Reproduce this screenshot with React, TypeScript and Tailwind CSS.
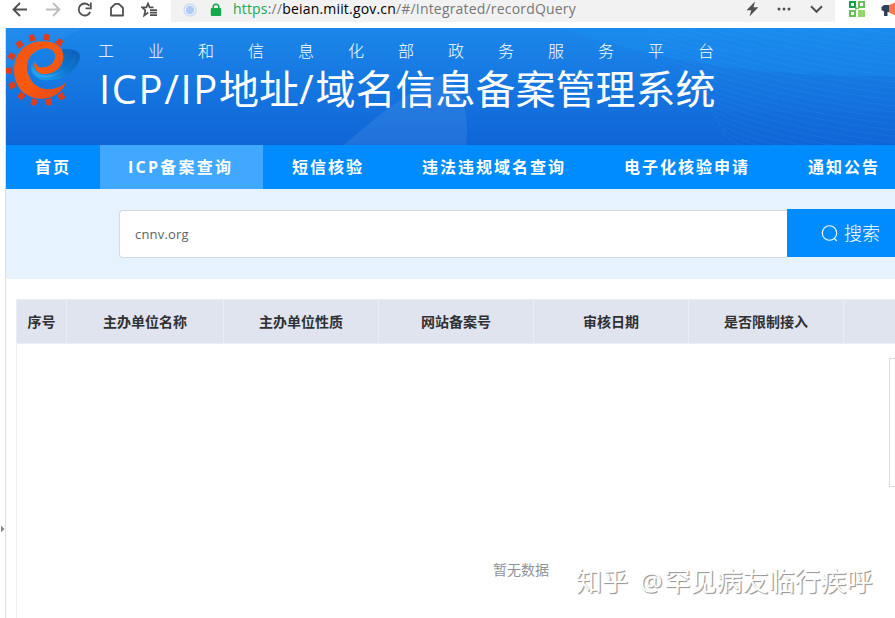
import React from "react";

const navItems = [
  { label: "首页", active: false },
  { label: "ICP备案查询", active: true },
  { label: "短信核验", active: false },
  { label: "违法违规域名查询", active: false },
  { label: "电子化核验申请", active: false },
  { label: "通知公告", active: false },
];

const columns = ["主办单位名称", "主办单位性质", "网站备案号", "审核日期", "是否限制接入"];

const waveOffsets = Array.from({ length: 26 }, (_, i) => i * 6);

const logoTeeth = [
  { x: 59, y: 58, r: -35 },
  { x: 96, y: 39, r: -12 },
  { x: 140, y: 37, r: 8 },
  { x: 178, y: 52, r: 35 },
  { x: 35, y: 94, r: -65 },
  { x: 27, y: 137, r: -90 },
  { x: 37, y: 181, r: -115 },
  { x: 64, y: 213, r: -140 },
  { x: 102, y: 231, r: -165 },
  { x: 146, y: 231, r: 168 },
  { x: 184, y: 214, r: 145 },
];

const Logo: React.FC = () => (
  <svg className="h-[80px] w-[76px] shrink-0" viewBox="18 9 228 240">
    <defs>
      <linearGradient id="ring" x1="0" y1="0" x2="1" y2="1">
        <stop offset="0" stopColor="#ee5416" />
        <stop offset="0.5" stopColor="#fb5a0c" />
        <stop offset="1" stopColor="#e2461c" />
      </linearGradient>
      <linearGradient id="swoosh" x1="1" y1="0" x2="0" y2="1">
        <stop offset="0" stopColor="#0f5cb6" />
        <stop offset="0.45" stopColor="#0d74cf" />
        <stop offset="1" stopColor="#1fa6f2" />
      </linearGradient>
    </defs>
    {logoTeeth.map((tooth) => (
      <path
        key={`${tooth.x}-${tooth.y}`}
        d="M-8 -10H8L10 9H-10Z"
        fill="#e03c1b"
        transform={`translate(${tooth.x} ${tooth.y}) rotate(${tooth.r})`}
      />
    ))}
    {/* Blue tail behind the letter */}
    <path
      d="M187 73C214 69 241 77 240 96C238 126 200 163 148 166C116 168 94 150 93 132C92 122 97 113 103 108C101 130 115 147 138 147C166 146 190 126 190 97Z"
      fill="url(#swoosh)"
    />
    <path
      d="M96 120C98 148 134 162 176 144C206 130 226 108 228 88C222 116 184 150 144 157C114 159 93 142 96 120Z"
      fill="#45b8f6"
      opacity="0.55"
    />
    {/* Gear-shaped letter e */}
    <path
      d="M200 170C186 204 154 223 120 221C72 218 42 182 42 137C42 86 76 49 126 49C166 49 191 66 190 97C188 126 166 146 138 147C117 148 104 137 103 122C102 116 104 111 107 108C108 124 118 129 133 127C154 124 168 108 165 88C160 68 130 64 108 78C84 93 76 118 84 146C94 180 124 196 152 192C174 189 189 181 200 170Z"
      fill="url(#ring)"
    />
  </svg>
);

const BrowserBar: React.FC = () => (
  <div className="flex h-[28px] items-start bg-white text-[#505050]">
    <div className="flex h-[20px] w-[171px] shrink-0 items-center pl-[12px]">
      <svg className="mr-[17px] h-4 w-4" viewBox="0 0 16 16" fill="none" stroke="currentColor" strokeWidth="1.8">
        <path d="M15 7.5H2M8 1L1.5 7.5L8 14" />
      </svg>
      <svg className="mr-[16px] h-4 w-4" viewBox="0 0 16 16" fill="none" stroke="#bdbdbd" strokeWidth="1.8">
        <path d="M1 7.5H14M8 1L14.5 7.5L8 14" />
      </svg>
      <svg className="mr-[16px] h-4 w-4" viewBox="0 0 16 16" fill="none" stroke="currentColor" strokeWidth="1.8">
        <path d="M13.2 10A6 6 0 1 1 12.4 3.7M13.8 0.5V6.3H8.5" />
      </svg>
      <svg className="mr-[16px] h-4 w-4" viewBox="0 0 16 16" fill="none" stroke="currentColor" strokeWidth="1.8">
        <path d="M2 13.5V6L6.2 1.8H9.8L14 6V13.5Z" strokeLinejoin="round" />
      </svg>
      <svg className="h-4 w-4" viewBox="0 0 16 16" fill="none" stroke="currentColor" strokeWidth="1.7">
        <path d="M12.5 5.4H8.6L7 1.5L5.4 5.4H1.2L4.3 8.3L3.2 13.4L7.2 10.5M9 8.2H16M9 10.7H16M9 13.2H16" />
      </svg>
    </div>

    {/* Address field */}
    <div className="flex h-[22px] w-[664px] shrink-0 items-start bg-[#f2f2f2]">
      <svg className="ml-[12px] mt-[3px] h-[14px] w-[14px]" viewBox="0 0 14 14" fill="none">
        <circle cx="7" cy="7" r="6" stroke="#cbdcf8" strokeWidth="1.4" />
        <circle cx="7" cy="7" r="4.2" fill="#aecbfa" />
      </svg>
      <svg className="ml-[13px] mt-[3px] h-[14px] w-[12px]" viewBox="0 0 12 14">
        <path d="M3.2 6V4A2.8 2.8 0 0 1 8.8 4V6" fill="none" stroke="#13a94b" strokeWidth="1.5" />
        <rect x="0.8" y="5" width="10.4" height="8" rx="1" fill="#13a94b" />
      </svg>
      <span className="ml-[11px] w-[510px] whitespace-nowrap text-[14px] leading-[18px] tracking-[0.18px] text-[#777]">
        <span className="text-[#18a84f]">https</span>://<span className="text-black">beian.miit.gov.cn</span>
        /#/Integrated/recordQuery
      </span>
      <svg className="ml-[3px] mt-[1px] h-4 w-[13px]" viewBox="0 0 13 16">
        <path d="M9 0.5L0.5 9.3H5.2L3.5 15.5L12.4 6.3H7.5Z" fill="currentColor" />
      </svg>
      <svg className="ml-[18px] mt-[7px] h-[4px] w-[14px]" viewBox="0 0 14 4" fill="currentColor">
        <circle cx="2" cy="2" r="1.5" />
        <circle cx="7" cy="2" r="1.5" />
        <circle cx="12" cy="2" r="1.5" />
      </svg>
      <svg className="ml-[19px] mt-[5px] h-[9px] w-[13px]" viewBox="0 0 13 9" fill="none">
        <path d="M1 1.3L6.5 6.8L12 1.3" stroke="currentColor" strokeWidth="2" />
      </svg>
    </div>

    <div className="flex min-w-0 flex-1 overflow-hidden pl-[14px]">
      <svg className="h-[17px] w-4 shrink-0" viewBox="0 0 16 17" fill="none" strokeWidth="2">
        <rect x="1" y="2" width="5" height="5" stroke="#14a14a" />
        <rect x="10" y="2" width="5" height="5" stroke="#67c155" />
        <rect x="1" y="11" width="5" height="5" stroke="#67c155" />
        <rect x="9" y="10" width="7" height="7" fill="#94d56d" />
        <path d="M7 7V10M10 8.5H6" stroke="#67c155" strokeWidth="1" />
      </svg>
      <svg className="ml-[16px] h-[18px] w-[20px] shrink-0" viewBox="0 0 20 18">
        <path d="M7 5.5L20 0V18L7 12Z" fill="#fa744e" />
        <path d="M3 5H8V12H6.5V16H3V11.5L0.5 10V7Z" fill="#2c405a" />
      </svg>
    </div>
  </div>
);

const Banner: React.FC = () => (
  <div className="relative h-[117px] overflow-hidden bg-linear-to-b from-[#1c87ea] to-[#1065d6]">
    <svg className="absolute inset-0 h-[117px] w-[889px]" viewBox="0 0 889 117" fill="none">
      <path d="M0 0H80C48 12 20 28 0 48Z" fill="#3ba0f5" opacity="0.2" />
      <path d="M338 117C366 92 398 66 439 45C456 61 464 86 460 117Z" fill="#5b9cec" opacity="0.24" />
      <path d="M555 0H889V48C780 50 660 38 555 0Z" fill="#1ba0ff" opacity="0.2" />
      {waveOffsets.map((offset) => (
        <path
          key={offset}
          d={`M${600 + offset * 0.8} ${offset - 50}C700 ${offset - 38} 790 ${offset - 10} 889 ${offset}`}
          stroke="#5cb6ff"
          strokeWidth="1"
          opacity="0.1"
        />
      ))}
    </svg>
    <div className="relative flex">
      <Logo />
      <div className="whitespace-nowrap pl-[16px] pt-[11px] text-white">
        <p className="text-[16px] leading-[24px] tracking-[34px] font-light">工业和信息化部政务服务平台</p>
        <h1 className="pl-px text-[40px] leading-[52px] font-normal">
          <span className="tracking-[1.6px]">ICP/IP</span>地址<span className="tracking-[2px]">/</span>
          域名信息备案管理系统
        </h1>
      </div>
    </div>
  </div>
);

const NavBar: React.FC = () => (
  <nav className="flex h-[44px] bg-[#008cff]">
    {navItems.map((item) => (
      <a
        key={item.label}
        className={`flex shrink-0 items-center whitespace-nowrap text-[16px] font-bold text-white ${
          item.active ? "w-[163px] bg-[#40a9ff] pl-[28px] tracking-[2.25px]" : "px-[29px] tracking-[2px]"
        }`}
      >
        {item.label}
      </a>
    ))}
  </nav>
);

const SearchBar: React.FC = () => (
  <div className="flex h-[90px] items-start bg-[#e6f3ff] pl-[113px] pt-[20px]">
    <div className="mt-px flex h-[48px] w-[668px] shrink-0 items-center rounded-l border border-r-0 border-[#d3dce5] bg-white pl-[15px] pt-[2px] text-[13px] tracking-[0.2px] text-[#606266]">
      cnnv.org
    </div>
    <button className="flex h-[48px] flex-1 items-center bg-[#008cff] pl-[34px] text-[18px] font-light text-white">
      <svg className="mr-[6px] h-[17px] w-[17px]" viewBox="0 0 17 17" fill="none" stroke="currentColor" strokeWidth="1.1">
        <circle cx="8.5" cy="8" r="7.2" />
        <path d="M12.8 13L15.8 16" />
      </svg>
      搜索
    </button>
  </div>
);

const ResultTable: React.FC = () => (
  <div className="ml-[10px] mt-[20px] flex flex-1 flex-col border-l border-[#ebeef5]">
    <div className="flex h-[45px] shrink-0 border-y border-[#ebeef5] bg-[#e0e4ef] text-[14px] font-bold text-[#303133]">
      <div className="flex w-[50px] shrink-0 items-center justify-center border-r border-[#ebeef5]">序号</div>
      {columns.map((column, i) => (
        <div
          key={column}
          className={`flex shrink-0 items-center justify-center border-r border-[#ebeef5] ${
            i === 0 ? "w-[157px]" : "w-[155px]"
          }`}
        >
          {column}
        </div>
      ))}
    </div>
    <p className="mt-[215px] pl-[476px] text-[14px] leading-[21px] text-[#909399]">暂无数据</p>
  </div>
);

const App: React.FC = () => {
  return (
    <div className="relative flex h-[618px] w-[895px] flex-col overflow-hidden bg-white font-['Open_Sans','Noto_Sans_CJK_SC',sans-serif]">
      <BrowserBar />
      <div className="flex min-h-0 flex-1">
        {/* Collapsed sidebar handle */}
        <div className="flex w-[6px] shrink-0 items-start border-r border-[#dedede] pt-[497px]">
          <svg className="h-[8px] w-[5px]" viewBox="0 0 5 8">
            <path d="M1 0.5L4.5 4L1 7.5Z" fill="#888" />
          </svg>
        </div>
        <main className="flex min-w-0 flex-1 flex-col overflow-hidden">
          <Banner />
          <NavBar />
          <SearchBar />
          <ResultTable />
        </main>
      </div>

      {/* Floating panel cut off by the window edge */}
      <div className="absolute left-[889px] top-[358px] h-[129px] w-[20px] border border-[#dcdcdc] bg-white" />

      <div className="absolute left-[576px] top-[563px] whitespace-nowrap text-[26px] leading-[36px] text-white [text-shadow:1px_1px_1px_#999,1px_1px_0_#bbb]">
        知乎<span className="ml-[12px] mr-[2px] text-[25px]">@</span>罕见病友临行疾呼
      </div>
    </div>
  );
};

export default App;
